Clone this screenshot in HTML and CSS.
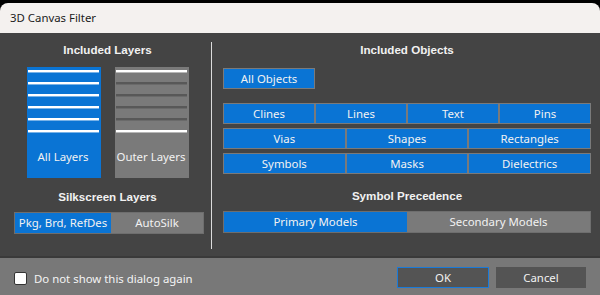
FILE: index.html
```html
<!DOCTYPE html>
<html>
<head>
<meta charset="utf-8">
<link rel="stylesheet" href="styles.css">
</head>
<body>
<div class="window">
  <div class="titlebar">3D Canvas Filter</div>
  <div class="content">
    <div class="left">
      <div class="heading">Included Layers</div>
      <div class="cards">
        <div class="card card-on">
          <div class="lines">
            <span class="ln"></span><span class="ln"></span><span class="ln"></span>
            <span class="ln"></span><span class="ln"></span><span class="ln"></span>
          </div>
          <div class="card-label">All Layers</div>
        </div>
        <div class="card card-off">
          <div class="lines">
            <span class="ln"></span><span class="ln dim"></span><span class="ln dim"></span>
            <span class="ln dim"></span><span class="ln dim"></span><span class="ln"></span>
          </div>
          <div class="card-label">Outer Layers</div>
        </div>
      </div>
      <div class="heading heading-silk">Silkscreen Layers</div>
      <div class="seg seg-silk">
        <div class="seg-item on">Pkg, Brd, RefDes</div>
        <div class="seg-item off">AutoSilk</div>
      </div>
    </div>
    <div class="sep"></div>
    <div class="right">
      <div class="heading">Included Objects</div>
      <div class="btn all-objects">All Objects</div>
      <div class="grid grid4">
        <div class="btn">Clines</div>
        <div class="btn">Lines</div>
        <div class="btn">Text</div>
        <div class="btn">Pins</div>
      </div>
      <div class="grid grid3">
        <div class="btn">Vias</div>
        <div class="btn">Shapes</div>
        <div class="btn">Rectangles</div>
      </div>
      <div class="grid grid3">
        <div class="btn">Symbols</div>
        <div class="btn">Masks</div>
        <div class="btn">Dielectrics</div>
      </div>
      <div class="heading heading-sym">Symbol Precedence</div>
      <div class="seg seg-sym">
        <div class="seg-item on">Primary Models</div>
        <div class="seg-item off">Secondary Models</div>
      </div>
    </div>
  </div>
  <div class="footer">
    <label class="check"><span class="box"></span><span>Do not show this dialog again</span></label>
    <div class="actions">
      <div class="fbtn ok">OK</div>
      <div class="fbtn cancel">Cancel</div>
    </div>
  </div>
</div>
</body>
</html>
```
FILE: styles.css
```css
* { box-sizing: border-box; }
html, body { margin: 0; padding: 0; }
body {
  background: #000;
  width: 600px;
  height: 295px;
  overflow: hidden;
  font-family: "Noto Sans", "Open Sans", sans-serif;
  font-size: 11.4px;
  color: #f2f2f2;
}
.window {
  margin-top: 3px;
  height: 292px;
  border-radius: 8px 8px 0 0;
  overflow: hidden;
  display: flex;
  flex-direction: column;
}
.titlebar {
  height: 30px;
  background: #f4f1ef;
  color: #1b1b1b;
  padding-left: 10px;
  line-height: 30px;
  font-size: 11.4px;
}
.content {
  height: 225px;
  background: #444444;
  border-bottom: 2px solid #3a3a3a;
  display: flex;
  padding-top: 9px;
}
.heading {
  font-family: "Liberation Sans", Arial, sans-serif;
  font-weight: 700;
  font-size: 11.6px;
  line-height: 16px;
  text-align: center;
  color: #f2f2f2;
}
.left {
  width: 211px;
  padding-left: 4px;
  display: flex;
  flex-direction: column;
}
.cards {
  display: flex;
  justify-content: center;
  gap: 14px;
  margin-top: 9px;
}
.card {
  width: 74px;
  height: 111px;
  display: flex;
  flex-direction: column;
  padding: 3px 2px 13px 1px;
}
.card-on { background: #0a74d4; }
.card-off { background: #7a7a7a; }
.lines {
  display: flex;
  flex-direction: column;
  gap: 9px;
}
.ln {
  display: block;
  height: 3px;
  border-top: 2px solid #ffffff;
  border-bottom: 1px solid rgba(255,255,255,0.45);
}
.ln.dim {
  border-top-color: #585858;
  border-bottom-color: #6a6a6a;
}
.card-label {
  margin-top: auto;
  line-height: 16px;
  text-align: center;
  white-space: nowrap;
}
.heading-silk { margin-top: 11px; }
.seg {
  display: flex;
  height: 22px;
  border: 1px solid #6e6e6e;
  margin-top: 7px;
}
.seg-silk {
  width: 190px;
  margin-left: 10px;
}
.seg-item {
  line-height: 20px;
  text-align: center;
  white-space: nowrap;
}
.seg-item.on { background: #0a74d4; }
.seg-item.off { background: #7a7a7a; }
.seg-silk .on { width: 96px; }
.seg-silk .off { flex: 1; }
.sep {
  width: 1px;
  background: #dcdcdc;
  margin: 0 0 7px 0;
}
.right {
  flex: 1;
  padding: 0 9px 0 11px;
  display: flex;
  flex-direction: column;
}
.btn {
  background: #0a74d4;
  border: 1px solid #7a7a7a;
  height: 21px;
  line-height: 19px;
  text-align: center;
  white-space: nowrap;
}
.all-objects {
  width: 92px;
  margin-top: 10px;
  margin-bottom: 14px;
}
.grid {
  display: grid;
  margin-bottom: 4px;
}
.grid4 { grid-template-columns: repeat(4, 1fr); }
.grid3 { grid-template-columns: repeat(3, 1fr); }
.heading-sym { margin-top: 10px; }
.seg-sym .seg-item { flex: 1; }
.footer {
  flex: 1;
  background: #787878;
  display: flex;
  align-items: center;
  padding: 0 14px;
}
.check {
  display: flex;
  align-items: center;
  gap: 7px;
  color: #f4f4f4;
  margin-top: 3px;
}
.box {
  width: 13px;
  height: 13px;
  background: #fff;
  border: 1px solid #333;
  border-radius: 2px;
}
.actions {
  margin-left: auto;
  display: flex;
  gap: 7px;
  margin-top: 2px;
}
.fbtn {
  height: 21px;
  line-height: 19px;
  text-align: center;
  background: #545454;
  border: 1px solid #545454;
  color: #f2f2f2;
}
.ok { width: 92px; border-color: #1a7ad8; }
.cancel { width: 90px; }
```
